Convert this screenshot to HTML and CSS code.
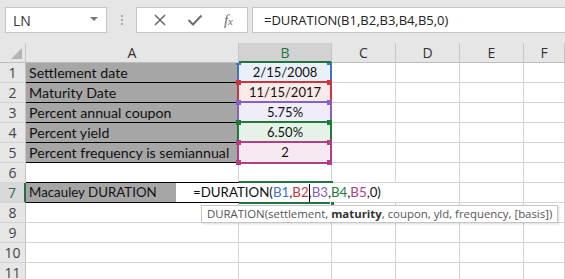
FILE: index.html
```html
<!DOCTYPE html>
<html lang="en">
<head>
    <meta charset="UTF-8">
    <title>DURATION</title>
    <link rel="stylesheet" href="styles.css">
</head>
<body>
    <div class="app">
        <div class="formula-bar">
            <div class="name-box">
                <span>LN</span>
                <span class="drop"></span>
            </div>
            <div class="grip"><i></i><i></i><i></i></div>
            <div class="fx-buttons">
                <svg width="14" height="14" viewBox="0 0 14 14"><path d="M2 2 L12 12 M12 2 L2 12" stroke="#6d6d6d" stroke-width="1.6" fill="none"/></svg>
                <svg width="16" height="14" viewBox="0 0 16 14"><path d="M1.5 7 L6 11.5 L14.5 2.5" stroke="#6d6d6d" stroke-width="2" fill="none"/></svg>
                <span class="fx">f<small>x</small></span>
            </div>
            <div class="formula-input">=DURATION(B1,B2,B3,B4,B5,0)</div>
        </div>

        <div class="sheet">
            <!-- headers -->
            <div class="corner"><span></span></div>
            <div class="ch">A</div>
            <div class="ch sel">B</div>
            <div class="ch">C</div>
            <div class="ch">D</div>
            <div class="ch">E</div>
            <div class="ch">F</div>

            <div class="rh">1</div>
            <div class="cell label">Settlement date</div>
            <div class="cell rng r1">2/15/2008</div>
            <div class="cell"></div><div class="cell"></div><div class="cell"></div><div class="cell"></div>

            <div class="rh">2</div>
            <div class="cell label">Maturity Date</div>
            <div class="cell rng r2">11/15/2017</div>
            <div class="cell"></div><div class="cell"></div><div class="cell"></div><div class="cell"></div>

            <div class="rh">3</div>
            <div class="cell label">Percent annual coupon</div>
            <div class="cell rng r3">5.75%</div>
            <div class="cell"></div><div class="cell"></div><div class="cell"></div><div class="cell"></div>

            <div class="rh">4</div>
            <div class="cell label">Percent yield</div>
            <div class="cell rng r4">6.50%</div>
            <div class="cell"></div><div class="cell"></div><div class="cell"></div><div class="cell"></div>

            <div class="rh">5</div>
            <div class="cell label">Percent frequency is semiannual</div>
            <div class="cell rng r5">2</div>
            <div class="cell"></div><div class="cell"></div><div class="cell"></div><div class="cell"></div>

            <div class="rh">6</div>
            <div class="cell"></div><div class="cell"></div><div class="cell"></div><div class="cell"></div><div class="cell"></div><div class="cell"></div>

            <div class="rh sel">7</div>
            <div class="edit">
                <span class="edit-label">Macauley DURATION</span>
                <span class="edit-text">=DURATION(<b class="c1">B1</b>,<b class="c2">B2</b><span class="caret"></span>,<b class="c3">B3</b>,<b class="c4">B4</b>,<b class="c5">B5</b>,0)</span>
                <span class="handle"></span>
            </div>
            <div class="cell"></div><div class="cell"></div><div class="cell"></div>

            <div class="rh">8</div>
            <div class="cell"></div><div class="cell"></div><div class="cell"></div><div class="cell"></div><div class="cell"></div><div class="cell"></div>
            <div class="rh">9</div>
            <div class="cell"></div><div class="cell"></div><div class="cell"></div><div class="cell"></div><div class="cell"></div><div class="cell"></div>
            <div class="rh">10</div>
            <div class="cell"></div><div class="cell"></div><div class="cell"></div><div class="cell"></div><div class="cell"></div><div class="cell"></div>
            <div class="rh">11</div>
            <div class="cell"></div><div class="cell"></div><div class="cell"></div><div class="cell"></div><div class="cell"></div><div class="cell"></div>

            <div class="tooltip">DURATION(settlement, <b>maturity</b>, coupon, yld, frequency, [basis])</div>
        </div>
    </div>
</body>
</html>
```

FILE: styles.css
```css
body {
    margin: 0;
    background: #fff;
    font-family: "Open Sans", "Liberation Sans", sans-serif;
    overflow: hidden;
}
* {
    box-sizing: border-box;
}
.app {
    width: 565px;
    height: 279px;
    overflow: hidden;
}

/* formula bar */
.formula-bar {
    height: 43px;
    background: #e6e6e6;
    display: flex;
    align-items: flex-start;
    padding: 7px 0 0 5px;
}
.name-box {
    width: 102px;
    height: 26px;
    background: #fff;
    border: 1px solid #c6c6c6;
    display: flex;
    align-items: center;
    justify-content: space-between;
    padding: 0 8px 0 7px;
    font-size: 14px;
    color: #333;
}
.drop {
    width: 0;
    height: 0;
    border-left: 4px solid transparent;
    border-right: 4px solid transparent;
    border-top: 4px solid #777;
    margin-top: -3px;
}
.grip {
    width: 29px;
    height: 26px;
    display: flex;
    flex-direction: column;
    align-items: center;
    justify-content: center;
    gap: 2px;
}
.grip i {
    width: 2px;
    height: 2px;
    background: #a9a9a9;
}
.fx-buttons {
    width: 112px;
    height: 26px;
    background: #fff;
    border: 1px solid #c6c6c6;
    display: flex;
    align-items: center;
    justify-content: space-between;
    padding: 0 14px 0 16px;
}
.fx {
    font-family: "Liberation Serif", serif;
    font-style: italic;
    font-size: 15px;
    color: #6d6d6d;
}
.fx small {
    font-size: 11px;
}
.formula-input {
    flex: 1;
    height: 26px;
    margin-left: 4px;
    background: #fff;
    border: 1px solid #c6c6c6;
    border-right: none;
    padding: 0 0 0 11px;
    font-size: 13px;
    line-height: 24px;
    color: #222;
    white-space: nowrap;
}

/* sheet */
.sheet {
    position: relative;
    display: grid;
    grid-template-columns: 26px 213px 93px 64px 64px 64px 1fr;
    grid-template-rows: 20px;
    grid-auto-rows: 20px;
    font-size: 14px;
}
.corner, .ch, .rh {
    background: #e6e6e6;
    color: #333;
    position: relative;
    z-index: 2;
}
.corner {
    border-right: 1px solid #c6c6c6;
    border-bottom: 1px solid #bcbcbc;
}
.corner span {
    position: absolute;
    right: 3px;
    bottom: 3px;
    width: 0;
    height: 0;
    border-left: 11px solid transparent;
    border-bottom: 11px solid #b4b4b4;
}
.ch {
    text-align: center;
    line-height: 19px;
    border-right: 1px solid #c6c6c6;
    border-bottom: 1px solid #bcbcbc;
}
.ch.sel {
    background: #d2d2d2;
    color: #217346;
    border-bottom: 2px solid #217346;
}
.rh {
    text-align: center;
    line-height: 19px;
    color: #444;
    border-right: 1px solid #c6c6c6;
    border-bottom: 1px solid #d4d4d4;
}
.rh.sel {
    background: #d9d9d9;
    color: #217346;
    border-right: 2px solid #217346;
}
.cell {
    border-right: 1px solid #d4d4d4;
    border-bottom: 1px solid #d4d4d4;
    line-height: 19px;
    white-space: nowrap;
    color: #111;
    font-family: Lato, "Open Sans", sans-serif;
    font-size: 14.2px;
}
.cell.label {
    background: #a6a6a6;
    border-right-color: #a6a6a6;
    border-bottom: 1px solid #000;
    padding-left: 3px;
}

/* colored ranges used by the formula */
.rng {
    position: relative;
    text-align: center;
    font-size: 13px;
}
.rng::after {
    content: '';
    position: absolute;
    left: -2px;
    right: -1px;
    top: -2px;
    bottom: -2px;
    border: 2px solid var(--c);
}
.rng::before {
    content: '';
    position: absolute;
    left: -3px;
    top: -3px;
    width: 5px;
    height: 5px;
    background: var(--c);
    z-index: 1;
    box-shadow: 91px 0 0 var(--c), 0 20px 0 var(--c), 91px 20px 0 var(--c);
}
.r1 { --c: #4472c4; background: #e9f0fa; }
.r2 { --c: #c8373f; background: #fae9e9; }
.r3 { --c: #8661c1; background: #f0ecf8; }
.r4 { --c: #1e7b3a; background: #e6f2e8; }
.r5 { --c: #b13f84; background: #f7e9f2; }
.c1 { color: #4472c4; }
.c2 { color: #c8373f; }
.c3 { color: #8661c1; }
.c4 { color: #1e7b3a; }
.c5 { color: #b13f84; }

/* row 7, cell being edited */
.edit {
    grid-column: 2 / 5;
    position: relative;
    display: flex;
    align-items: center;
    background: #fff;
    white-space: nowrap;
    border-bottom: 1px solid #d4d4d4;
    font-family: Lato, "Open Sans", sans-serif;
    font-size: 13.3px;
}
.edit::before {
    content: '';
    position: absolute;
    left: 0;
    width: 213px;
    top: -1px;
    bottom: -1px;
    border-top: 1px solid #000;
    border-bottom: 1px solid #000;
}
.edit::after {
    content: '';
    position: absolute;
    left: 213px;
    width: 94px;
    top: -2px;
    bottom: -2px;
    border-top: 2px solid #217346;
    border-bottom: 2px solid #217346;
}
.edit-label {
    width: 150px;
    height: 100%;
    background: #a6a6a6;
    padding-left: 3px;
    line-height: 19px;
    color: #111;
}
.edit-text {
    padding-left: 17px;
    color: #111;
    line-height: 19px;
    display: flex;
    align-items: center;
}
.edit-text b {
    font-weight: normal;
}
.caret {
    width: 1px;
    height: 18px;
    background: #000;
    margin-right: -1px;
}
.handle {
    position: absolute;
    left: 304px;
    bottom: -4px;
    width: 5px;
    height: 5px;
    background: #217346;
    border: 1px solid #fff;
    z-index: 1;
}

.tooltip {
    position: absolute;
    left: 201px;
    top: 162px;
    width: 357px;
    height: 18px;
    background: #fff;
    border: 1px solid #c6c6c6;
    box-shadow: 1px 1px 2px rgba(0, 0, 0, 0.15);
    font-size: 11.4px;
    line-height: 16px;
    color: #555;
    padding-left: 5px;
    white-space: nowrap;
    z-index: 3;
}
.tooltip b {
    color: #333;
}
```
